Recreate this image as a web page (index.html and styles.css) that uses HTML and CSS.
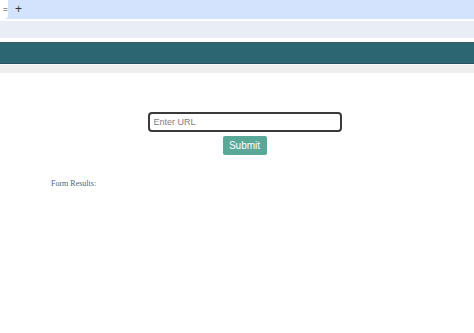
FILE: index.html
```html
<!DOCTYPE html>
<html>
<head>
<meta charset="utf-8" />
<title>URL Form</title>
<link rel="stylesheet" href="styles.css">
</head>
<body>
<div class="tabstrip">
	<div class="tab">=</div>
	<div class="newtab">+</div>
</div>
<div class="toolbar"></div>
<div class="header"></div>
<div class="subbar"></div>

<form class="urlform">
	<input type="text" class="url" placeholder="Enter URL" />
	<button type="button" class="submit">Submit</button>
</form>

<p class="results">Form Results:</p>
</body>
</html>
```

FILE: styles.css
```css
*{ margin:0; padding:0; box-sizing:border-box;}
body{ background:#fff; font-family:"Liberation Sans", Arial, sans-serif;}

.tabstrip{ height:19px; background:#d3e3fd; display:flex; align-items:center;}
.tab{ width:8px; height:19px; background:#fff; font-size:9px; line-height:19px; color:#444; overflow:hidden; text-align:right; border-radius:0 0 4px 0;}
.newtab{ margin-left:7px; font-size:12px; color:#333; line-height:19px;}

.toolbar{ height:17px; margin-top:2px; background:#e9eef6;}
.header{ height:22px; margin-top:4px; background:#2c6673; border-top:1px solid #3d5d63; border-bottom:1px solid #24555f;}
.subbar{ height:9px; background:#efefef; border-top:1px solid #fafafa;}

.urlform{ display:flex; flex-direction:column; align-items:center; padding-left:15px; margin-top:39px;}
.url{ width:194px; height:20px; border:2px solid #3a3a3a; border-radius:4px; padding:0 4px; font-size:9px; font-family:"Liberation Sans", Arial, sans-serif; color:#333; outline:none;}
.url::placeholder{ color:#808080;}
.submit{ margin-top:4px; width:44px; height:19px; border:none; border-radius:2px; background:#5aa898; color:#fff; font-size:10px; font-family:"Liberation Sans", Arial, sans-serif;}

.results{ margin:24px 0 0 51px; font-family:"Liberation Serif", "Times New Roman", serif; font-size:8px; color:#4a6585;}
```
